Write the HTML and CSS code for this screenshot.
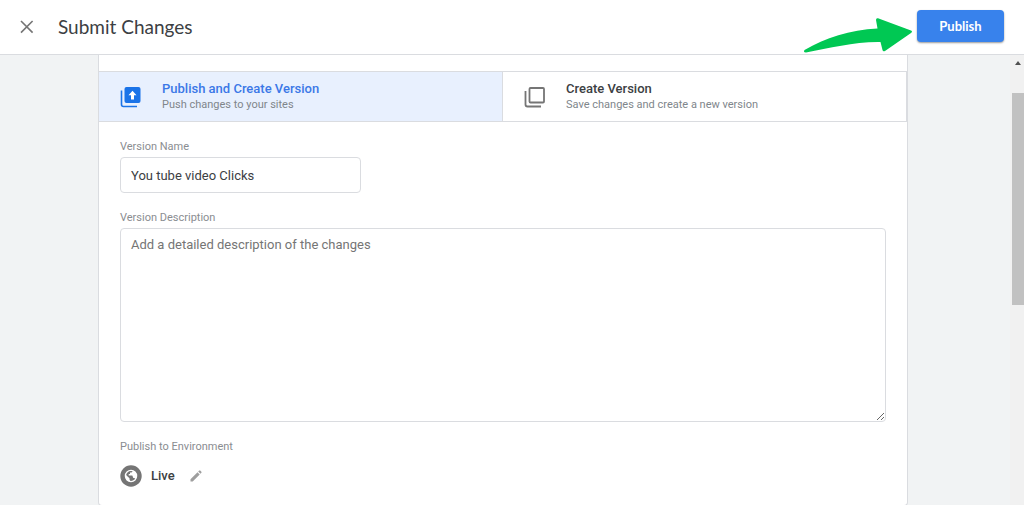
FILE: index.html
```
<!DOCTYPE html>
<html lang="en">
<head>
  <meta charset="UTF-8">
  <title>Submit Changes</title>
  <meta name="viewport" content="width=device-width, initial-scale=1.0">
  <link rel="stylesheet" href="styles.css">
</head>
<body>
  <header class="header">
    <button class="close-btn" type="button" aria-label="Close">
      <svg width="14" height="14" viewBox="0 0 14 14"><path d="M1 1l11.600 11.600M12.600 1L1 12.600" stroke="#757575" stroke-width="1.600"/></svg>
    </button>
    <h1 class="title">Submit Changes</h1>
    <svg class="arrow" width="110" height="36" viewBox="0 0 110 36" aria-hidden="true">
      <path d="M1.500 33C22 21 47 13 74.500 11.500L73 3Q73 .8 75 1.300L108 13.500Q110 14.500 108 16L82 34Q80 35 79.500 33L77.500 25C52 24.500 27 31 3 35.500Q0 35.500 1.500 33Z" fill="#00c853"/>
    </svg>
    <button class="publish-btn" type="submit" form="submitForm">Publish</button>
  </header>
  <div class="page">
    <main class="content">
      <form class="card" id="submitForm">
        <div class="options">
          <button class="option selected" type="button" aria-pressed="true">
            <svg class="option-icon" width="22" height="22" viewBox="0 0 22 22">
              <path d="M1.500 4.500V18.500Q1.500 20.500 3.500 20.500H17" fill="none" stroke="#1a73e8" stroke-width="1.600"/>
              <rect x="4.500" y="1" width="16" height="16" rx="2" fill="#1a73e8"/>
              <path d="M12.500 4.700L16.500 9.200H14V13.500H11V9.200H8.500Z" fill="#fff"/>
            </svg>
            <span class="option-text">
              <span class="option-name">Publish and Create Version</span>
              <span class="option-hint">Push changes to your sites</span>
            </span>
          </button>
          <button class="option" type="button" aria-pressed="false">
            <svg class="option-icon" width="22" height="22" viewBox="0 0 22 22">
              <path d="M1.500 5V18.500Q1.500 20.500 3.500 20.500H17" fill="none" stroke="#757575" stroke-width="1.800"/>
              <rect x="5.500" y="2" width="14.500" height="14.500" rx="1" fill="none" stroke="#757575" stroke-width="1.800"/>
            </svg>
            <span class="option-text">
              <span class="option-name">Create Version</span>
              <span class="option-hint">Save changes and create a new version</span>
            </span>
          </button>
        </div>
        <div class="fields">
          <label class="label" for="versionName">Version Name</label>
          <input class="name-input" id="versionName" type="text" value="You tube video Clicks">
          <label class="label" for="versionDescription">Version Description</label>
          <textarea class="description" id="versionDescription" placeholder="Add a detailed description of the changes"></textarea>
          <div class="label">Publish to Environment</div>
          <div class="environment">
            <svg width="22" height="22" viewBox="0 0 22 22" aria-hidden="true">
              <circle cx="11" cy="11" r="10.700" fill="#757575"/>
              <circle cx="11" cy="11" r="5.600" fill="#757575" stroke="#fff" stroke-width="1.300"/>
              <path d="M5.500 9.500L9.500 13.300V14.500L10.500 16.500C7 16.500 5 13.500 5.500 9.500ZM12.500 5.500V6.500L11.500 7.600H10V9H8.700V10.500H12.300L13.300 13H14.500L15.400 14.500C17.800 11 16.500 6.500 12.500 5.500Z" fill="#fff"/>
            </svg>
            <span class="environment-name">Live</span>
            <button class="edit-btn" type="button" aria-label="Edit environment">
              <svg width="12" height="12" viewBox="0 0 12 12"><path d="M.5 9.300L7.500 2.300L9.700 4.500L2.700 11.500H.5ZM8.200 1.600L9.200.6Q9.700.2 10.200.6L11.400 1.800Q11.800 2.300 11.400 2.800L10.400 3.800Z" fill="#9e9e9e"/></svg>
            </button>
          </div>
        </div>
      </form>
    </main>
    <div class="scrollbar" aria-hidden="true">
      <div class="scroll-up"></div>
      <div class="scroll-thumb"></div>
    </div>
  </div>
</body>
</html>
```
FILE: styles.css
```
* {
  box-sizing: border-box;
}
body {
  margin: 0;
  height: 100vh;
  display: flex;
  flex-direction: column;
  overflow: hidden;
  background: #f1f3f4;
  font-family: Roboto, Arial, sans-serif;
  color: #3c4043;
}
button, input, textarea {
  font-family: inherit;
}
.header {
  flex: none;
  display: flex;
  align-items: center;
  height: 55px;
  padding: 0 20px;
  background: #fff;
  border-bottom: 1px solid #dadce0;
}
.close-btn, .edit-btn {
  display: flex;
  padding: 0;
  border: none;
  background: none;
  cursor: pointer;
}
.title {
  flex: 1;
  margin: 0 0 0 24px;
  font-family: Lato, sans-serif;
  font-size: 19px;
  line-height: 24px;
  font-weight: 400;
}
.arrow {
  margin: 16px 4px 0 0;
}
.publish-btn {
  width: 87px;
  height: 32px;
  margin-bottom: 2px;
  padding: 0;
  border: none;
  border-radius: 4px;
  background: #3882ec;
  box-shadow: 0 1px 2px rgba(0, 0, 0, 0.4);
  color: #fff;
  font-family: Lato, sans-serif;
  font-size: 13px;
  font-weight: bold;
  cursor: pointer;
}
.page {
  flex: 1;
  min-height: 0;
  display: flex;
}
.content {
  flex: 1;
  padding: 0 10px 0 6px;
}
.card {
  max-width: 810px;
  margin: 0 auto;
  padding: 16px 0 18px;
  background: #fff;
  border: 1px solid #dadce0;
  border-top: none;
  border-radius: 0 0 4px 4px;
}
.options {
  display: flex;
  border: 1px solid #dadce0;
  border-left: none;
}
.option {
  flex: 1;
  display: flex;
  align-items: center;
  gap: 20px;
  height: 49px;
  padding: 0 21px;
  border: none;
  background: #fff;
  color: #3c4043;
  text-align: left;
  cursor: pointer;
}
.option + .option {
  border-left: 1px solid #dadce0;
}
.option.selected {
  background: #e8f0fe;
}
.option-name, .option-hint {
  display: block;
}
.option-name {
  font-size: 13px;
  line-height: 16px;
  font-weight: 500;
}
.selected .option-name {
  color: #3b78e7;
}
.option-hint {
  font-size: 11px;
  line-height: 16px;
  color: #80868b;
}
.fields {
  padding: 17px 21px 0;
}
.label {
  display: block;
  font-size: 11px;
  line-height: 16px;
  color: #8a8d91;
}
.name-input, .description {
  display: block;
  border: 1px solid #dadce0;
  border-radius: 4px;
  background: #fff;
  color: #3c4043;
  font-size: 13px;
}
.name-input {
  width: 241px;
  height: 36px;
  margin: 2px 0 17px;
  padding: 0 10px;
}
.description {
  width: 100%;
  height: 194px;
  margin: 2px 0 17px;
  padding: 8px 10px;
  line-height: 16px;
}
.description::placeholder {
  color: #757575;
}
.environment {
  display: flex;
  align-items: center;
  gap: 9px;
  margin-top: 10px;
}
.environment-name {
  font-size: 13px;
  line-height: 16px;
  font-weight: 500;
}
.edit-btn {
  margin-left: 6px;
}
.scrollbar {
  display: flex;
  flex-direction: column;
  align-items: flex-end;
  width: 14px;
  background: #f1f1f1;
}
.scroll-up {
  margin: 6px 3px 28px;
  border: 3px solid transparent;
  border-top: none;
  border-bottom: 4px solid #505050;
}
.scroll-thumb {
  width: 12px;
  height: 47%;
  background: #c1c1c1;
}
```
